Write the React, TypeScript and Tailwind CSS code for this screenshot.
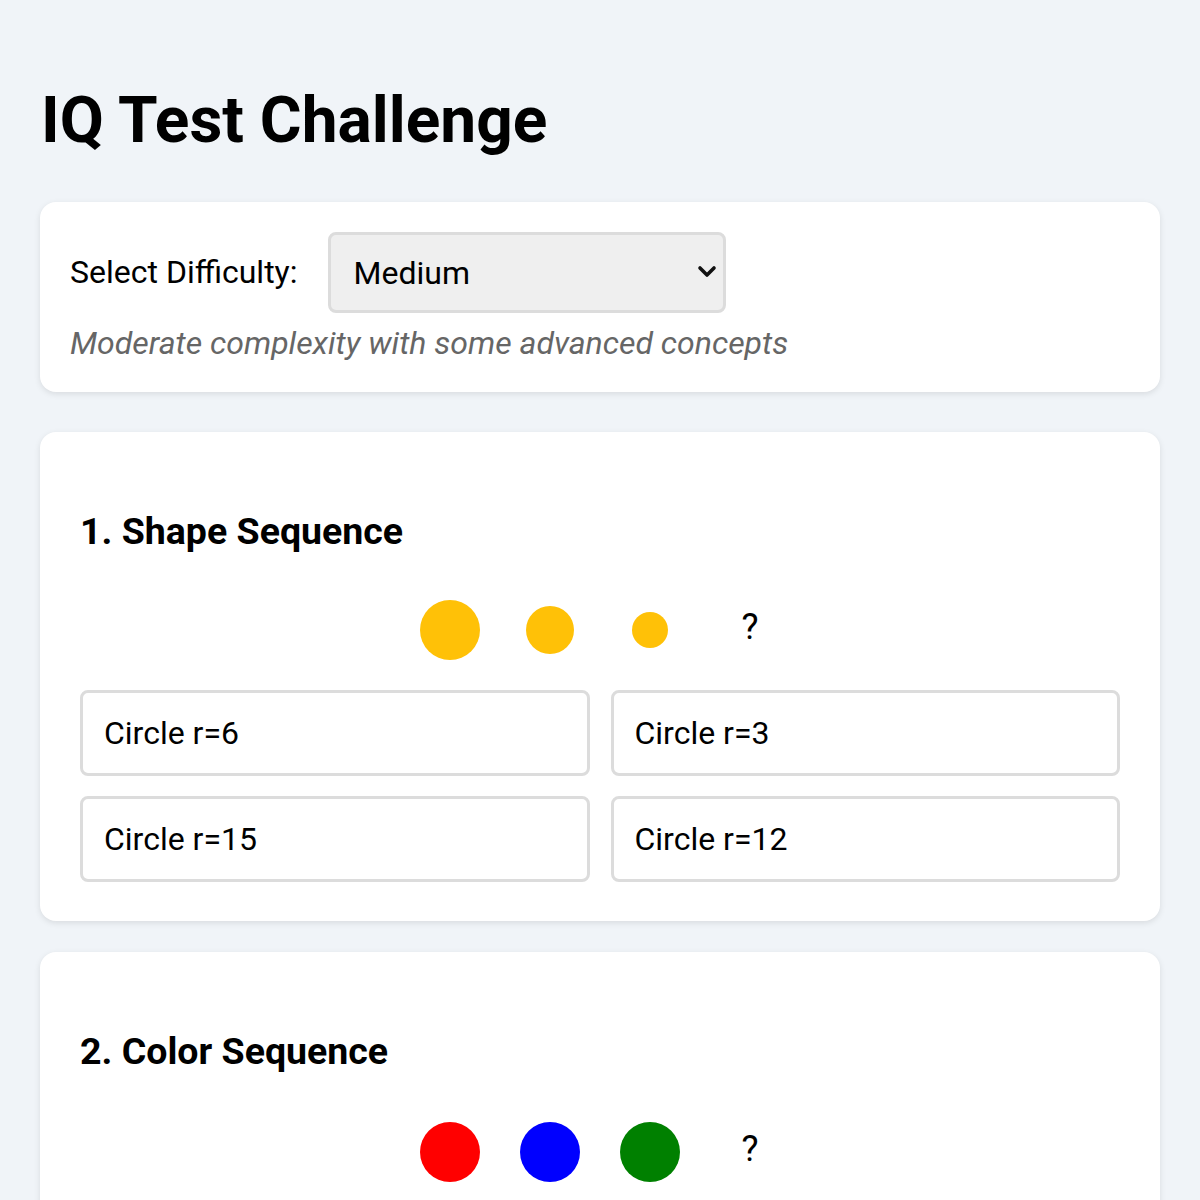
import React from "react";

const Circle = ({ r, color }: { r: number; color: string }) => (
  <svg width="60" height="60" viewBox="0 0 60 60" className="block">
    <circle cx="30" cy="30" r={r} fill={color} />
  </svg>
);

export default function App() {
  const options = ["Circle r=6", "Circle r=3", "Circle r=15", "Circle r=12"];
  return (
    <div
      className="min-h-[1200px] bg-[#f0f4f8] px-[40px] pt-[40px] text-black"
      style={{ fontFamily: "Roboto, 'Noto Sans', sans-serif" }}
    >
      <h1 className="text-[64px] font-bold leading-[75px] mt-[43px] mb-[44px] pl-[1px]">IQ Test Challenge</h1>

      <div className="bg-white rounded-[16px] shadow-[0_2px_6px_rgba(0,0,0,0.1)] p-[30px] mb-[40px]">
        <div className="flex items-center gap-[30px]">
          <span className="text-[32px] leading-[37px]">Select Difficulty:</span>
          <div className="relative w-[398px] h-[81px]">
            <div className="w-full h-full bg-[#efefef] border-[3px] border-[#dcdcdc] rounded-[8px] flex items-center pl-[23px] text-[32px]">
              Medium
            </div>
            <svg className="absolute right-[9px] top-[33px]" width="20" height="14" viewBox="0 0 20 14">
              <path d="M3 3 L10 10 L17 3" fill="none" stroke="#111" strokeWidth="3.6" strokeLinecap="round" strokeLinejoin="round" />
            </svg>
          </div>
        </div>
        <p className="mt-[12px] text-[32px] leading-[37px] italic text-[#666]">
          Moderate complexity with some advanced concepts
        </p>
      </div>

      <div className="bg-white rounded-[16px] shadow-[0_2px_6px_rgba(0,0,0,0.1)] px-[40px] pt-[77px] pb-[39px] mb-[31px]">
        <h3 className="text-[37.5px] font-bold leading-[44px] mb-[47px]">1. Shape Sequence</h3>
        <div className="flex justify-center items-center gap-[40px] mb-[30px]">
          <Circle r={30} color="#ffc107" />
          <Circle r={24} color="#ffc107" />
          <Circle r={18} color="#ffc107" />
          <div className="w-[60px] h-[60px] flex items-center justify-center text-[36px] pb-[6px]">?</div>
        </div>
        <div className="grid grid-cols-2 gap-x-[21px] gap-y-[20px]">
          {options.map((o) => (
            <div
              key={o}
              className="border-[3px] border-[#dcdcdc] rounded-[8px] bg-white h-[86px] flex items-center pl-[21px] text-[32px]"
            >
              {o}
            </div>
          ))}
        </div>
      </div>

      <div className="bg-white rounded-t-[16px] shadow-[0_2px_6px_rgba(0,0,0,0.1)] px-[40px] pt-[77px] pb-[40px]">
        <h3 className="text-[37.5px] font-bold leading-[44px] mb-[49px]">2. Color Sequence</h3>
        <div className="flex justify-center items-center gap-[40px] mb-[30px]">
          <Circle r={30} color="#ff0000" />
          <Circle r={30} color="#0000ff" />
          <Circle r={30} color="#008000" />
          <div className="w-[60px] h-[60px] flex items-center justify-center text-[36px] pb-[6px]">?</div>
        </div>
        <div className="h-[200px]" />
      </div>
    </div>
  );
}
